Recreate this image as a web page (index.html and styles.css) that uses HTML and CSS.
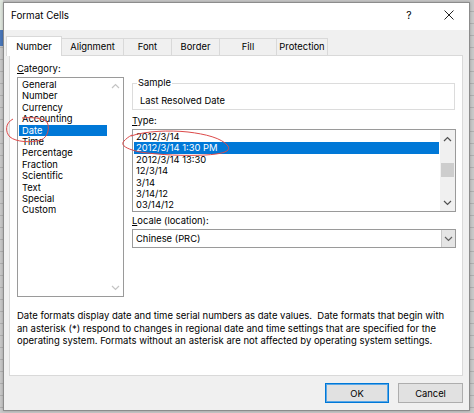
FILE: index.html
```html
<!DOCTYPE html>
<html>
<head>
<meta charset="utf-8">
<title>Format Cells</title>
<link rel="stylesheet" href="styles.css">
</head>
<body>
<div class="dialog">
  <div class="titlebar">
    <span class="title">Format Cells</span>
    <span class="help">?</span>
    <svg class="close" viewBox="0 0 12 12"><path d="M1.5 1.5 L10.5 10.5 M10.5 1.5 L1.5 10.5" stroke="#222" stroke-width="1" fill="none"/></svg>
  </div>
  <div class="tabs">
    <div class="tab active">Number</div>
    <div class="tab">Alignment</div>
    <div class="tab">Font</div>
    <div class="tab">Border</div>
    <div class="tab">Fill</div>
    <div class="tab">Protection</div>
  </div>
  <div class="panel">
    <div class="main">
      <div class="catcol">
        <div class="label"><u>C</u>ategory:</div>
        <div class="listbox cat">
          <ul class="items">
            <li>General</li>
            <li>Number</li>
            <li>Currency</li>
            <li>Accounting</li>
            <li class="sel">Date</li>
            <li>Time</li>
            <li>Percentage</li>
            <li>Fraction</li>
            <li>Scientific</li>
            <li>Text</li>
            <li>Special</li>
            <li>Custom</li>
          </ul>
          <div class="vscroll off">
            <svg class="arrow" viewBox="0 0 9 6"><path d="M1 5 L4.5 1.5 L8 5" stroke="#c4c4c4" stroke-width="1.2" fill="none"/></svg>
            <svg class="arrow" viewBox="0 0 9 6"><path d="M1 1 L4.5 4.5 L8 1" stroke="#c4c4c4" stroke-width="1.2" fill="none"/></svg>
          </div>
        </div>
      </div>
      <div class="rightcol">
        <fieldset class="sample">
          <legend>Sample</legend>
          <div class="sampleval">Last Resolved Date</div>
        </fieldset>
        <div class="label gap5"><u>T</u>ype:</div>
        <div class="listbox type">
          <ul class="items">
            <li>2012/3/14</li>
            <li class="sel">2012/3/14 1:30 PM</li>
            <li>2012/3/14 13:30</li>
            <li>12/3/14</li>
            <li>3/14</li>
            <li>3/14/12</li>
            <li>03/14/12</li>
          </ul>
          <div class="vscroll on">
            <svg class="arrow" viewBox="0 0 9 6"><path d="M1 5 L4.5 1.5 L8 5" stroke="#505050" stroke-width="1.2" fill="none"/></svg>
            <div class="track"><div class="thumb"></div></div>
            <svg class="arrow" viewBox="0 0 9 6"><path d="M1 1 L4.5 4.5 L8 1" stroke="#505050" stroke-width="1.2" fill="none"/></svg>
          </div>
        </div>
        <div class="label gap3"><u>L</u>ocale (location):</div>
        <div class="combo">
          <span class="comboval">Chinese (PRC)</span>
          <span class="ddbtn"><svg class="arrow" viewBox="0 0 9 6"><path d="M1 1 L4.5 4.5 L8 1" stroke="#606060" stroke-width="1.2" fill="none"/></svg></span>
        </div>
      </div>
    </div>
    <p class="desc">Date formats display date and time serial numbers as date values.&nbsp; Date formats that begin with<br>an asterisk (*) respond to changes in regional date and time settings that are specified for the<br>operating system. Formats without an asterisk are not affected by operating system settings.</p>
  </div>
  <div class="buttons">
    <button class="btn default">OK</button>
    <button class="btn">Cancel</button>
  </div>
</div>
<svg class="marks" viewBox="0 0 474 413">
  <path d="M22 118 C32 117 43 118 47 122 C50 128 48 137 41 140 C31 143 16 142 10 137 C5 132 5 123 13 119" stroke="#dd4a4a" stroke-width="1" fill="none"/>
  <path d="M131 136 C145 131 170 130 188 132 C205 134 222 138 228 146 C231 151 224 154 205 155 C185 156 160 155 140 152 C126 149 120 145 124 141 C126 139 128 137 132 135" stroke="#dd4a4a" stroke-width="1" fill="none"/>
</svg>
</body>
</html>
```
FILE: styles.css
```css
* { box-sizing: border-box; }
html, body { margin: 0; padding: 0; }
body {
  width: 474px;
  height: 413px;
  overflow: hidden;
  position: relative;
  font-family: Inter, "Noto Sans", sans-serif;
  font-size: 9.4px;
  color: #000;
  background:
    linear-gradient(to bottom, #dfe6de 0, #dfe6de 30px, #4a78bb 30px, #4a78bb 46px, transparent 46px) 0 0 / 3px 100% no-repeat,
    repeating-linear-gradient(to bottom, #c9c9c9 0, #c9c9c9 11px, #b0b0b0 11px, #b0b0b0 12px),
    #c9c9c9;
}
.dialog {
  margin: 2px 0 0 3px;
  width: 467px;
  height: 409px;
  background: #f0f0f0;
  border: 1px solid #8c8c8c;
  display: flex;
  flex-direction: column;
  box-shadow: 0 0 3px rgba(0,0,0,0.25);
}
.titlebar {
  height: 27px;
  flex: none;
  background: #fff;
  display: flex;
  align-items: center;
  padding: 0 0 3px 7px;
}
.title { flex: 1; font-size: 9.8px; }
.help { width: 14px; text-align: center; margin-right: 27px; font-size: 10.5px; }
.close { width: 12px; height: 12px; margin-right: 14px; }

.tabs {
  flex: none;
  margin-top: 6px;
  height: 19px;
  padding-left: 2px;
  display: grid;
  grid-template-columns: 56px 62px 48px 48px 57px 51px;
  justify-content: start;
  align-items: end;
}
.tab {
  height: 17px;
  line-height: 16px;
  text-align: center;
  border: 1px solid #d9d9d9;
  border-bottom: none;
  border-left: none;
  background: #f0f0f0;
}
.tab.active {
  height: 20px;
  line-height: 19px;
  margin-bottom: -1px;
  border-left: 1px solid #d9d9d9;
  background: #fff;
  position: relative;
  z-index: 1;
}
.panel {
  flex: none;
  margin: 0 6px 0 5px;
  height: 321px;
  background: #fff;
  border: 1px solid #d9d9d9;
  padding: 7px 6px 0 7px;
}
.main { display: flex; gap: 8px; }
.catcol { width: 107px; flex: none; }
.rightcol { flex: 1; display: flex; flex-direction: column; }
.label { height: 12px; line-height: 12px; margin-bottom: 2px; }
.gap5 { margin-top: 5px; }
.gap3 { margin-top: 3px; }

.listbox {
  border: 1px solid #9a9a9a;
  display: flex;
  background: #fff;
}
.listbox.cat { height: 220px; }
.listbox.type { height: 83px; }
.items {
  list-style: none;
  margin: 0;
  padding: 1px 1px 0 1px;
  flex: 1;
  overflow: hidden;
}
.items li {
  height: 11.4px;
  line-height: 11.4px;
  padding-left: 2px;
  white-space: nowrap;
}
.items li.sel { background: #0078d7; color: #fff; }
.cat .items li { padding-left: 3px; }
.vscroll {
  width: 15px;
  flex: none;
  display: flex;
  flex-direction: column;
  align-items: center;
  justify-content: space-between;
  padding: 5px 0 5px;
}
.vscroll.on { background: #f0f0f0; padding: 6px 0 5px; }
.arrow { width: 9px; height: 6px; display: block; }
.track { flex: 1; width: 100%; padding-top: 21px; }
.thumb { width: 13px; height: 14px; margin: 0 auto; background: #cdcdcd; }

.sample {
  margin: 14px 1px 0 0;
  padding: 0 2px 2px 7px;
  border: 1px solid #dcdcdc;
}
.sample legend {
  padding: 0 1px;
  margin-left: -3px;
  line-height: 12px;
  height: 12px;
}
.sampleval { line-height: 12px; margin-top: 6px; }

.combo {
  height: 19px;
  border: 1px solid #9a9a9a;
  display: flex;
  align-items: stretch;
}
.comboval { flex: 1; line-height: 17px; padding-left: 3px; }
.ddbtn {
  width: 14px;
  background: #e5e5e5;
  border-left: 1px solid #c8c8c8;
  display: flex;
  align-items: center;
  justify-content: center;
}

.desc {
  margin: 13px 0 0 0;
  font-size: 9.5px;
  line-height: 12.5px;
  white-space: nowrap;
}

.buttons {
  flex: none;
  margin-top: 7px;
  padding-right: 6px;
  display: flex;
  justify-content: flex-end;
  gap: 9px;
}
.btn {
  width: 65px;
  height: 20px;
  font: inherit;
  color: #000;
  background: #e1e1e1;
  border: 1px solid #adadad;
  padding: 0;
}
.btn.default {
  width: 64px;
  border-color: #0078d7;
  box-shadow: inset 0 0 0 1px #5aa7e6;
}
.marks {
  position: absolute;
  left: 0;
  top: 0;
  width: 474px;
  height: 413px;
  pointer-events: none;
}
```
